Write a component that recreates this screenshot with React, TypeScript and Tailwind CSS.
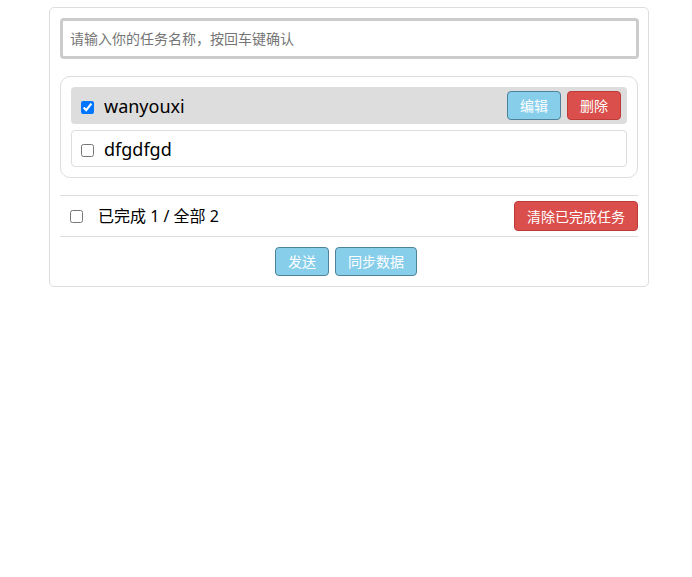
import React, { useState } from 'react';

type Todo = { id: number; name: string; done: boolean };

const font = { fontFamily: '"Noto Sans", "Noto Sans CJK SC", sans-serif' };

const App: React.FC = () => {
  const [todos, setTodos] = useState<Todo[]>([
    { id: 1, name: 'wanyouxi', done: true },
    { id: 2, name: 'dfgdfgd', done: false },
  ]);
  const [hoverId] = useState<number>(1);

  const doneCount = todos.filter((t) => t.done).length;

  const toggle = (id: number) => {
    setTodos(todos.map((t) => (t.id === id ? { ...t, done: !t.done } : t)));
  };

  return (
    <div className="pt-[7px] pl-[49px] bg-white min-h-[577px] text-black" style={font}>
      <div className="w-[600px] border border-[#ddd] rounded-[5px] p-[10px]">
        <input
          type="text"
          placeholder="请输入你的任务名称，按回车键确认"
          className="block w-[579px] h-[41px] border-[3px] border-[#ccc] rounded-[4px] px-[7px] text-[14px] outline-none placeholder:text-[#757575]"
        />

        <ul className="mt-[17px] border border-[#ddd] rounded-[10px] p-[10px] flex flex-col gap-[6px] list-none m-0">
          {todos.map((t) =>
            t.id === hoverId ? (
              <li key={t.id} className="h-[37px] bg-[#ddd] rounded-[4px] flex items-center pl-[10px] pr-[6px]">
                <input type="checkbox" checked={t.done} onChange={() => toggle(t.id)} className="w-[13px] h-[13px] m-0 mt-[3px]" />
                <span className="ml-[10px] text-[18px] leading-none">{t.name}</span>
                <div className="ml-auto flex gap-[6px]">
                  <button className="h-[29px] px-[12px] text-[14px] text-white bg-[#87ceeb] border border-[#4f8299] rounded-[4px]">
                    编辑
                  </button>
                  <button className="h-[29px] px-[12px] text-[14px] text-white bg-[#da4f4c] border border-[#bd3a37] rounded-[4px]">
                    删除
                  </button>
                </div>
              </li>
            ) : (
              <li key={t.id} className="h-[37px] border border-[#ddd] rounded-[4px] flex items-center pl-[9px]">
                <input type="checkbox" checked={t.done} onChange={() => toggle(t.id)} className="w-[13px] h-[13px] m-0 mt-[4px]" />
                <span className="ml-[10px] text-[18px] leading-none">{t.name}</span>
              </li>
            )
          )}
        </ul>

        <div className="mt-[17px] h-[42px] border-t border-b border-[#ddd] flex items-center pl-[10px]">
          <input type="checkbox" checked={doneCount === todos.length} readOnly className="w-[13px] h-[13px] m-0" />
          <span className="ml-[15px] text-[16px]">
            已完成 {doneCount} / 全部 {todos.length}
          </span>
          <button className="ml-auto h-[30px] px-[12px] text-[14px] text-white bg-[#da4f4c] border border-[#bd3a37] rounded-[4px]">
            清除已完成任务
          </button>
        </div>

        <div className="mt-[10px] flex justify-center gap-[6px] pr-[6px]">
          <button className="h-[29px] px-[12px] text-[14px] text-white bg-[#87ceeb] border border-[#4f8299] rounded-[4px]">
            发送
          </button>
          <button className="h-[29px] px-[12px] text-[14px] text-white bg-[#87ceeb] border border-[#4f8299] rounded-[4px]">
            同步数据
          </button>
        </div>
      </div>
    </div>
  );
};

export default App;
